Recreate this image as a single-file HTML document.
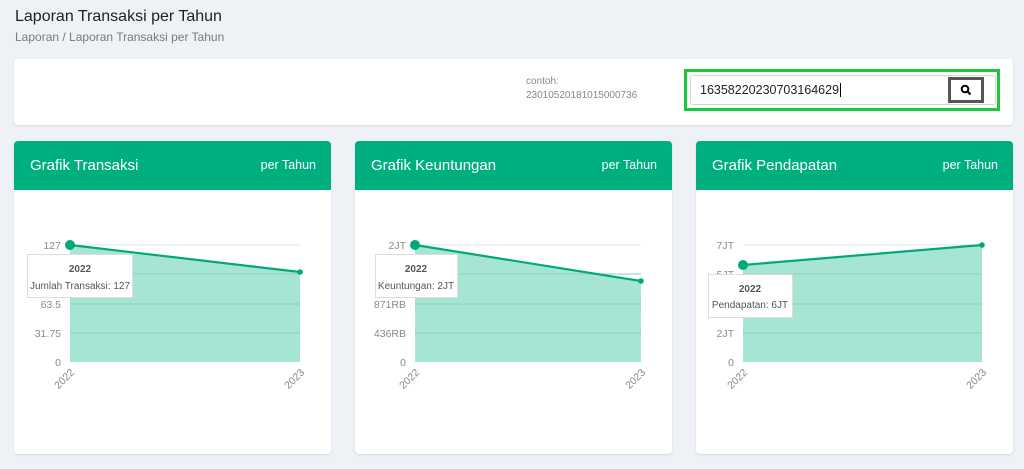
<!DOCTYPE html>
<html><head><meta charset="utf-8"><style>
body{margin:0;width:1024px;height:469px;background:#eef1f5;font-family:"Liberation Sans",sans-serif;position:relative;overflow:hidden}
.t{position:absolute;left:15px;top:8px;font-size:16px;color:#222;font-weight:500}
.b{position:absolute;left:15px;top:30px;font-size:12px;color:#7a7a7a}
.box{position:absolute;background:#fff;border-radius:4px;box-shadow:0 1px 2px rgba(0,0,0,.1)}
.hd{position:absolute;left:0;top:0;right:0;height:49px;background:#00af80;border-radius:4px 4px 0 0;color:#fff}
.hd .a{position:absolute;left:16px;top:16px;font-size:15px}
.hd .p{position:absolute;right:15px;top:17px;font-size:12.5px}
</style></head><body>
<div class="t">Laporan Transaksi per Tahun</div>
<div class="b">Laporan / Laporan Transaksi per Tahun</div>
<div class="box" style="left:14px;top:59px;width:999px;height:66px"></div>
<div style="position:absolute;left:526px;top:75px;font-size:10px;color:#888;line-height:14px">contoh:<br>23010520181015000736</div>
<div style="position:absolute;left:684px;top:69px;width:316px;height:42px;border:3px solid #19c93a;box-sizing:border-box"></div>
<div style="position:absolute;left:690px;top:75px;width:306px;height:30px;border:1px solid #cfd6d8;border-radius:3px;box-sizing:border-box;background:#fff"></div>
<div style="position:absolute;left:700px;top:83px;font-size:12.5px;color:#222">16358220230703164629<span style="border-left:1px solid #000;margin-left:1px"></span></div>
<div style="position:absolute;left:948px;top:77px;width:36px;height:26px;border:3px solid #555;box-sizing:border-box;background:#fff"></div>
<svg style="position:absolute;left:960px;top:84px" width="12" height="12"><circle cx="5" cy="5" r="3.3" fill="none" stroke="#000" stroke-width="2"/><line x1="7.5" y1="7.5" x2="10.5" y2="10.5" stroke="#000" stroke-width="2.2"/></svg>
<div class="box" style="left:14px;top:141px;width:317px;height:313px"><div class="hd"><span class="a">Grafik Transaksi</span><span class="p">per Tahun</span></div></div>
<div class="box" style="left:355px;top:141px;width:317px;height:313px"><div class="hd"><span class="a">Grafik Keuntungan</span><span class="p">per Tahun</span></div></div>
<div class="box" style="left:696px;top:141px;width:317px;height:313px"><div class="hd"><span class="a">Grafik Pendapatan</span><span class="p">per Tahun</span></div></div>
<svg style="position:absolute;left:0;top:0" width="1024" height="469" font-family="Liberation Sans,sans-serif" font-size="10.5" fill="#888">
<g stroke="#e2e2e2"><line x1="70" y1="245" x2="300" y2="245"/><line x1="415" y1="245" x2="641" y2="245"/><line x1="743" y1="245" x2="982" y2="245"/></g>
<polygon points="70,245 300,272 300,362 70,362" fill="#a6e5d3"/>
<polygon points="415,245 641,281 641,362 415,362" fill="#a6e5d3"/>
<polygon points="743,265 982,245 982,362 743,362" fill="#a6e5d3"/>
<g stroke="#8fcfbd"><line x1="70" y1="274" x2="300" y2="274"/><line x1="70" y1="304" x2="300" y2="304"/><line x1="70" y1="333" x2="300" y2="333"/>
<line x1="415" y1="274" x2="641" y2="274"/><line x1="415" y1="304" x2="641" y2="304"/><line x1="415" y1="333" x2="641" y2="333"/>
<line x1="743" y1="274" x2="982" y2="274"/><line x1="743" y1="304" x2="982" y2="304"/><line x1="743" y1="333" x2="982" y2="333"/></g>
<g stroke="#00a97a" stroke-width="2.2"><line x1="70" y1="245" x2="300" y2="272"/><line x1="415" y1="245" x2="641" y2="281"/><line x1="743" y1="265" x2="982" y2="245"/></g>
<g fill="#00a97a"><circle cx="70" cy="245" r="5"/><circle cx="300" cy="272" r="2.8"/><circle cx="415" cy="245" r="5"/><circle cx="641" cy="281" r="2.8"/><circle cx="743" cy="265" r="5"/><circle cx="982" cy="245" r="2.8"/></g>
<g text-anchor="end"><text x="61" y="249">127</text><text x="61" y="308">63.5</text><text x="61" y="337">31.75</text><text x="61" y="366">0</text>
<text x="406" y="249">2JT</text><text x="406" y="308">871RB</text><text x="406" y="337">436RB</text><text x="406" y="366">0</text>
<text x="734" y="249">7JT</text><text x="734" y="278">5JT</text><text x="734" y="337">2JT</text><text x="734" y="366">0</text>
<text transform="translate(75,373) rotate(-45)">2022</text><text transform="translate(305,373) rotate(-45)">2023</text>
<text transform="translate(420,373) rotate(-45)">2022</text><text transform="translate(646,373) rotate(-45)">2023</text>
<text transform="translate(748,373) rotate(-45)">2022</text><text transform="translate(987,373) rotate(-45)">2023</text></g>
<g stroke="#ddd" fill="#fff"><rect x="27.5" y="254.5" width="105" height="43"/><rect x="375.5" y="254.5" width="82" height="43"/><rect x="708.5" y="274.5" width="84" height="43"/></g>
<g text-anchor="middle" fill="#555" font-size="10"><text x="80" y="272" font-weight="bold">2022</text><text x="80" y="289">Jumlah Transaksi: 127</text>
<text x="416" y="272" font-weight="bold">2022</text><text x="416" y="289">Keuntungan: 2JT</text>
<text x="750" y="292" font-weight="bold">2022</text><text x="750" y="308">Pendapatan: 6JT</text></g>
</svg>
</body></html>
